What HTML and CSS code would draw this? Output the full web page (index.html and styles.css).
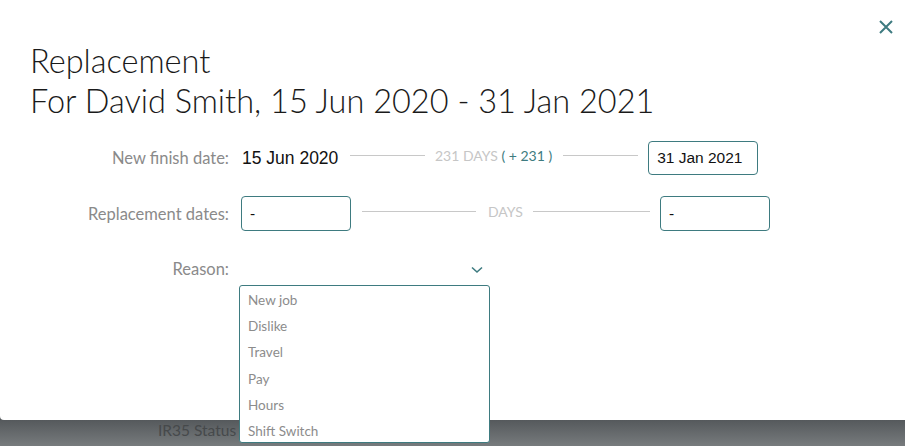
FILE: index.html
```html
<!DOCTYPE html>
<html>
<head>
<meta charset="utf-8">
<link rel="stylesheet" href="styles.css">
</head>
<body>
<div class="modal">
  <button class="close" aria-label="Close">
    <svg width="14" height="14" viewBox="0 0 14 14"><path d="M1 1L13 13M13 1L1 13" stroke="#3e7b80" stroke-width="2" fill="none"/></svg>
  </button>
  <h1 class="title">Replacement<br>For David Smith, 15 Jun 2020 - 31 Jan 2021</h1>
  <div class="form">
    <div class="row row1">
      <div class="label">New finish date:</div>
      <div class="value">15 Jun 2020</div>
      <div class="line l1"></div>
      <div class="days">231 DAYS <span class="plus">( + 231 )</span></div>
      <div class="line l2"></div>
      <div class="input">31 Jan 2021</div>
    </div>
    <div class="row row2">
      <div class="label">Replacement dates:</div>
      <div class="input">-</div>
      <div class="line l3"></div>
      <div class="days">DAYS</div>
      <div class="line l4"></div>
      <div class="input">-</div>
    </div>
    <div class="row row3">
      <div class="label">Reason:</div>
      <div class="select">
        <svg class="chev" width="12" height="8" viewBox="0 0 12 8"><path d="M1 1.5L6 6L11 1.5" stroke="#3e7b80" stroke-width="1.6" fill="none"/></svg>
        <ul class="options">
          <li>New job</li>
          <li>Dislike</li>
          <li>Travel</li>
          <li>Pay</li>
          <li>Hours</li>
          <li>Shift Switch</li>
        </ul>
      </div>
    </div>
  </div>
  <div class="ghost"></div>
</div>
<div class="behind">
  <span class="ir35">IR35 Status</span>
</div>
</body>
</html>
```
FILE: styles.css
```css
html, body {
  margin: 0;
  padding: 0;
}
body {
  width: 905px;
  height: 446px;
  overflow: hidden;
  background: linear-gradient(to bottom, #55595c 0, #55595c 420px, #777b7d 446px);
  font-family: Lato, "Noto Sans", sans-serif;
}
.modal {
  position: relative;
  background: #fff;
  height: 420px;
  width: 920px;
  border-bottom-left-radius: 4px;
  box-sizing: border-box;
  padding: 41px 0 0 30px;
}
.close {
  position: absolute;
  left: 879px;
  top: 20px;
  border: 0;
  background: none;
  padding: 0;
  width: 14px;
  height: 14px;
  cursor: pointer;
}
.close svg { display: block; }
.title {
  margin: 0;
  font-weight: 300;
  font-size: 32.5px;
  line-height: 40px;
  color: #1a1a1a;
}
.form {
  margin-top: 19px;
  margin-left: 1px;
  display: flex;
  flex-direction: column;
  gap: 21px;
}
.row {
  display: flex;
  align-items: center;
  height: 35px;
}
.label {
  width: 198px;
  text-align: right;
  font-size: 16.5px;
  color: #8a8a8a;
  flex: none;
}
.row1 .label { margin-right: 13px; }
.row2 .label { margin-right: 12px; }
.row3 .label { margin-right: 12px; }
.value {
  font-family: "Liberation Sans", Arial, sans-serif;
  font-size: 17.5px;
  color: #111;
  width: 98px;
  margin-right: 10px;
  position: relative;
  top: 1px;
  white-space: nowrap;
}
.line {
  height: 1px;
  background: #c8c8c8;
  flex: none;
  position: relative;
  top: -2px;
}
.l1 { width: 75px; margin-right: 10px; }
.l2 { width: 75px; margin-left: 11px; margin-right: 10px; }
.l3 { width: 114px; margin-left: 11px; margin-right: 12px; }
.l4 { width: 117px; margin-left: 10px; margin-right: 10px; }
.days {
  font-size: 14px;
  color: #c6c6c6;
  white-space: nowrap;
  position: relative;
  top: -2px;
}
.plus { color: #3e7b80; }
.input {
  box-sizing: border-box;
  width: 110px;
  height: 35px;
  border: 1px solid #3e7b80;
  border-radius: 4px;
  padding: 0 0 0 8px;
  font-family: "Liberation Sans", Arial, sans-serif;
  font-size: 15.5px;
  color: #111;
  display: flex;
  align-items: center;
  flex: none;
}
.row1 .input { height: 34px; }
.row3 { height: 30px; margin-top: 2px; }
.select {
  position: relative;
  width: 250px;
  height: 30px;
  margin-left: -2px;
}
.chev {
  position: absolute;
  left: 232px;
  top: 12px;
}
.options {
  position: absolute;
  left: 0;
  top: 31px;
  width: 251px;
  height: 158px;
  box-sizing: border-box;
  margin: 0;
  padding: 4px 0 0 0;
  list-style: none;
  background: #fff;
  border: 1px solid #3e7b80;
  border-radius: 3px;
  z-index: 5;
}
.options li {
  height: 26.2px;
  line-height: 20px;
  padding-left: 8px;
  font-size: 13.5px;
  color: #8c8c8c;
}
.ghost {
  position: absolute;
  left: 488px;
  top: 336px;
  width: 1px;
  height: 16px;
  background: #e2e2e2;
}
.behind {
  height: 26px;
  padding-left: 158px;
  position: relative;
}
.ir35 {
  display: inline-block;
  margin-top: -2px;
  font-size: 15.5px;
  color: #46494b;
}
```
